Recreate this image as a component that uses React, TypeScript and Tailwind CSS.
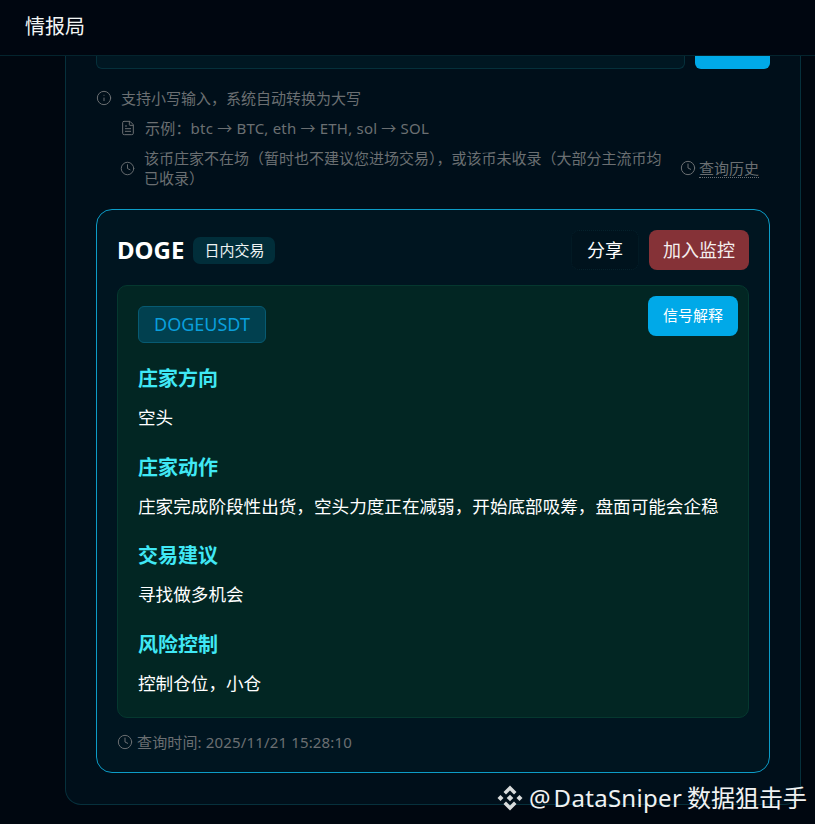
import React from "react";
import { Clock, Info, FileText } from "lucide-react";

const sections = [
  { title: "庄家方向", body: "空头" },
  { title: "庄家动作", body: "庄家完成阶段性出货，空头力度正在减弱，开始底部吸筹，盘面可能会企稳" },
  { title: "交易建议", body: "寻找做多机会" },
  { title: "风险控制", body: "控制仓位，小仓" },
];

function BinanceLogo() {
  return (
    <svg width="28" height="28" viewBox="0 0 28 28" fill="#d9dcdc">
      <path d="M14 1.5 L20.5 8 L18 10.5 L14 6.5 L10 10.5 L7.5 8 Z" />
      <path d="M14 26.5 L20.5 20 L18 17.5 L14 21.5 L10 17.5 L7.5 20 Z" />
      <path d="M4.5 11 L7.5 14 L4.5 17 L1.5 14 Z" />
      <path d="M23.5 11 L26.5 14 L23.5 17 L20.5 14 Z" />
      <path d="M14 10.7 L17.3 14 L14 17.3 L10.7 14 Z" />
    </svg>
  );
}

export default function App() {
  return (
    <div
      className="relative h-[824px] w-[815px] overflow-hidden bg-[#000710] text-white"
      style={{ fontFamily: '"Noto Sans", "Noto Sans CJK SC", sans-serif' }}
    >
      <header className="flex h-[56px] items-center border-b border-[#04242e] bg-[#000610] pb-[2px] pl-[25px]">
        <span className="text-[20px] leading-[26px] text-[#f2f5f5]">情报局</span>
      </header>

      <main className="ml-[65px] mr-[14px] h-[749px] rounded-b-[16px] border-x border-b border-[#06303c] bg-[#000f1a] px-[30px]">
        <div className="flex gap-[10px]">
          <div className="h-[13px] w-[589px] rounded-b-[6px] border-x border-b border-[#05303b] bg-[#001722]" />
          <div className="h-[13px] w-[75px] rounded-b-[6px] bg-[#00a9e8]" />
        </div>

        <div className="mt-[19px] flex items-center gap-[9px] text-[15px] leading-[20px] text-[#6b6f72]">
          <Info size={16} strokeWidth={1.5} />
          <span>支持小写输入，系统自动转换为大写</span>
        </div>

        <div className="ml-[24px] mt-[10px] flex items-center gap-[9px] text-[15px] leading-[20px] text-[#6b6f72]">
          <FileText size={16} strokeWidth={1.5} />
          <span className="tracking-[0.2px]">示例：btc → BTC, eth → ETH, sol → SOL</span>
        </div>

        <div className="ml-[24px] mt-[10px] flex items-center text-[15px] leading-[20px] text-[#6b6f72]">
          <Clock size={15} strokeWidth={1.5} className="shrink-0" />
          <span className="ml-[9px] w-[526px]">
            该币庄家不在场（暂时也不建议您进场交易），或该币未收录（大部分主流币均已收录）
          </span>
          <span className="ml-[10px] flex items-center gap-[3px] whitespace-nowrap">
            <Clock size={16} strokeWidth={1.5} />
            <span className="border-b border-dotted border-[#6b6f72] leading-[18px]">查询历史</span>
          </span>
        </div>

        <section className="mt-[21px] h-[564px] rounded-[16px] border border-[#0c9cc7] bg-[#001520] px-[20px] pt-[20px]">
          <div className="flex h-[40px] items-center justify-between">
            <div className="flex items-center gap-[9px]">
              <span className="text-[24px] font-bold leading-[28px] text-white">DOGE</span>
              <span className="flex h-[27px] items-center rounded-[7px] bg-[#012e3a] px-[11px] text-[15px] text-[#eef3f3]">
                日内交易
              </span>
            </div>
            <div className="flex items-center gap-[10px]">
              <button className="h-[40px] w-[68px] rounded-[8px] border border-dotted border-[#05222c] bg-[#00131d] text-[18px] text-white">
                分享
              </button>
              <button className="h-[40px] w-[100px] rounded-[8px] bg-[#853237] text-[18px] text-[#f4eeee]">
                加入监控
              </button>
            </div>
          </div>

          <div className="relative mt-[15px] h-[433px] rounded-[10px] border border-[#05382f] bg-[#022623] px-[20px] pt-[20px]">
            <button className="absolute right-[10px] top-[10px] h-[40px] w-[90px] rounded-[8px] bg-[#00a9e8] pb-[2px] text-[15px] text-white">
              信号解释
            </button>
            <span className="flex h-[37px] w-[128px] items-center justify-center rounded-[6px] border border-[#075a72] bg-[#01404f] text-[18px] text-[#0a9fdc]">
              DOGEUSDT
            </span>
            <div className="mt-[21px]">
              {sections.map((s, i) => (
                <div key={s.title} className={i === 0 ? "" : "mt-[21.67px]"}>
                  <h3 className="text-[20px] font-bold leading-[30px] text-[#40e8f5]">{s.title}</h3>
                  <p className="mt-[9px] text-[17.6px] leading-[28px] text-white">{s.body}</p>
                </div>
              ))}
            </div>
          </div>

          <div className="mt-[14px] flex items-center gap-[4px] text-[15px] leading-[20px] text-[#6b6f72]">
            <Clock size={16} strokeWidth={1.5} />
            <span className="tracking-[0.15px]">查询时间: 2025/11/21 15:28:10</span>
          </div>
        </section>
      </main>

      <div className="absolute left-[496px] top-[784px] flex items-center leading-[28px] text-[#f0f2f2]">
        <BinanceLogo />
        <span className="ml-[5px] whitespace-nowrap text-[24px]">@</span>
        <span className="ml-[3px] whitespace-nowrap text-[24px] tracking-[0.3px]">DataSniper</span>
        <span className="ml-[5px] whitespace-nowrap text-[24px]">数据狙击手</span>
      </div>
    </div>
  );
}
